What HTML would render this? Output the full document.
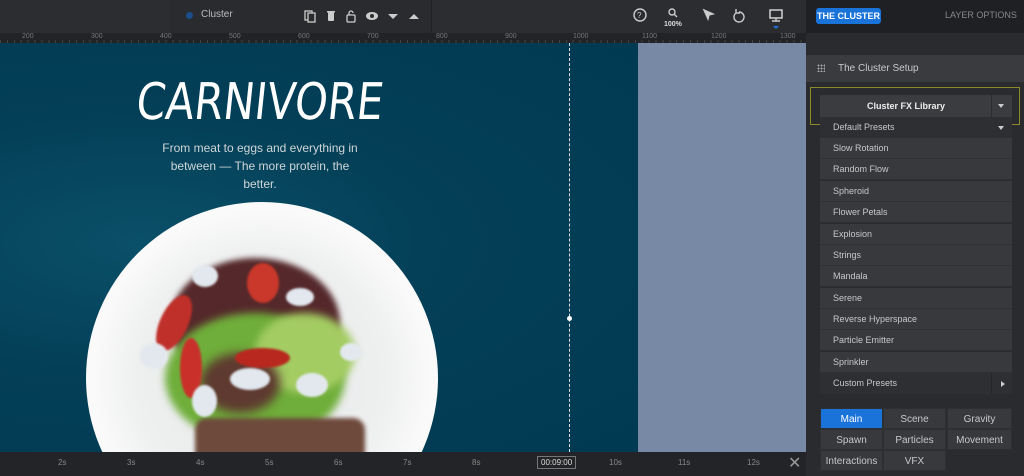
<!DOCTYPE html>
<html><head><meta charset="utf-8"><style>
*{margin:0;padding:0;box-sizing:border-box}
html,body{width:1024px;height:476px;overflow:hidden}
body{background:#2a2b2f;font-family:"Liberation Sans",sans-serif;position:relative}
.a{position:absolute}
.top{left:0;top:0;width:806px;height:33px;background:#2c2d31}
.ruler{left:0;top:33px;width:806px;height:10px;background:#222326;font-size:7px;color:#777;
background-image:repeating-linear-gradient(90deg,#444 0 1px,transparent 1px 6.9px);background-size:100% 3px;background-repeat:no-repeat;background-position:0 7px}
.canvas{left:0;top:43px;width:638px;height:409px;background:radial-gradient(ellipse at 140px 200px,#0a5068 0,#033f57 45%,#003a52 100%);overflow:hidden}
.grey{left:638px;top:43px;width:168px;height:409px;background:#7889a5}
.tl{left:0;top:452px;width:806px;height:24px;background:#232427;font-size:8px;color:#888;overflow:hidden}
.panel{left:806px;top:0;width:218px;height:476px;background:#2a2b2f}
.item{position:absolute;left:820px;width:192px;height:21px;background:#38393d;border-bottom:1px solid #2f3034;color:#c8c8c8;font-size:9px;line-height:21px;padding-left:13px}
.tab{position:absolute;width:63px;height:21px;background:#38393d;color:#c8c8c8;font-size:10px;text-align:center;line-height:21px;border:1px solid #2e2f33}
.b{position:absolute;border-radius:50%}
</style></head><body>
<div class="a top"></div>
<div class="a" style="left:170px;top:0;width:262px;height:33px;background:#2a2b2e;border-right:1px solid #222"></div>
<div class="a" style="left:186px;top:12px;width:7px;height:7px;border-radius:50%;background:#1b4e8a"></div>
<div class="a" style="left:201px;top:9px;color:#bbb;font-size:10px">Cluster</div>
<svg class="a" style="left:300px;top:7px" width="125" height="18" fill="#ccc">
<rect x="5" y="4" width="7" height="9" fill="none" stroke="#ccc" stroke-width="1.3"/><rect x="8" y="6" width="7" height="9" fill="#2a2b2e" stroke="#ccc" stroke-width="1.3"/>
<rect x="28" y="5" width="6" height="9" rx="1"/><rect x="27" y="4" width="8" height="1.5"/>
<rect x="47" y="8" width="8" height="7" rx="1" fill="none" stroke="#ccc" stroke-width="1.3"/><path d="M49 8V6a2 2 0 0 1 4 0" fill="none" stroke="#ccc" stroke-width="1.3"/>
<ellipse cx="72" cy="9" rx="6" ry="4"/><circle cx="72" cy="9" r="2" fill="#2a2b2e"/>
<path d="M88 7h10l-5 5z"/><path d="M109 12h10l-5-5z"/></svg>
<svg class="a" style="left:630px;top:6px" width="160" height="26" fill="none" stroke="#ccc" stroke-width="1.4">
<circle cx="10" cy="9" r="6"/><text x="7" y="12" font-size="8" fill="#ccc" stroke="none" font-family="Liberation Sans">?</text>
<circle cx="42" cy="6" r="3"/><path d="M44 8l3 3"/><text x="34" y="20" font-size="7" fill="#ddd" stroke="none" font-weight="bold" font-family="Liberation Sans">100%</text>
<path d="M74 4l9 4-4 1-1 4z" fill="#ccc"/>
<path d="M109 6a5 5 0 1 1-3 1M106 3v4h4"/>
<rect x="140" y="4" width="12" height="8" stroke="#ddd"/><path d="M146 12v3M142 15h8"/><path d="M143 20h6l-3 3z" fill="#1a73d9" stroke="none"/></svg>
<div class="a ruler"><span class="a" style="left:22px;top:0">200</span><span class="a" style="left:91px">300</span><span class="a" style="left:160px">400</span><span class="a" style="left:229px">500</span><span class="a" style="left:298px">600</span><span class="a" style="left:367px">700</span><span class="a" style="left:436px">800</span><span class="a" style="left:505px">900</span><span class="a" style="left:573px">1000</span><span class="a" style="left:642px">1100</span><span class="a" style="left:711px">1200</span><span class="a" style="left:780px">1300</span></div>
<div class="a canvas">
<div class="a" style="left:130px;top:34px;width:260px;text-align:center;color:#fff;font-family:'DejaVu Sans',sans-serif;font-size:44px;font-weight:normal;letter-spacing:0px;transform:skewX(-6deg) scaleY(1.15) scaleX(0.95)">CARNIVORE</div>
<div class="a" style="left:160px;top:96px;width:200px;text-align:center;color:#cfd6d8;font-size:12px;line-height:18px">From meat to eggs and everything in between — The more protein, the better.</div>
<div class="a" style="left:86px;top:159px;width:352px;height:352px;border-radius:50%;background:radial-gradient(circle,#e6e8ea 0,#eeefef 50%,#fafafa 68%,#f2f2f2 100%)"></div>
<div class="b" style="left:170px;top:215px;width:170px;height:130px;background:#55292b;filter:blur(3px)"></div>
<div class="b" style="left:165px;top:270px;width:180px;height:130px;background:#6fae3a;filter:blur(4px)"></div>
<div class="b" style="left:255px;top:270px;width:100px;height:80px;background:#a3cc62;filter:blur(4px)"></div>
<div class="b" style="left:200px;top:310px;width:80px;height:60px;background:#5e3a30;filter:blur(5px)"></div>
<div class="b" style="left:160px;top:250px;width:28px;height:60px;background:#c0302a;transform:rotate(25deg);filter:blur(1px)"></div>
<div class="b" style="left:180px;top:295px;width:22px;height:60px;background:#c9302a;filter:blur(1px)"></div>
<div class="b" style="left:247px;top:220px;width:32px;height:40px;background:#c9382a;filter:blur(1px)"></div>
<div class="b" style="left:235px;top:305px;width:55px;height:20px;background:#b8281f;filter:blur(1px)"></div>
<div class="a" style="left:195px;top:375px;width:170px;height:50px;border-radius:12px;background:#6e4a3c;filter:blur(2px)"></div>
<div class="b" style="left:140px;top:300px;width:28px;height:26px;background:#e2e8ee;filter:blur(1px)"></div>
<div class="b" style="left:230px;top:325px;width:40px;height:22px;background:#e2e8ee;filter:blur(1px)"></div>
<div class="b" style="left:296px;top:330px;width:32px;height:24px;background:#e2e8ee;filter:blur(1px)"></div>
<div class="b" style="left:192px;top:342px;width:25px;height:32px;background:#e2e8ee;filter:blur(1px)"></div>
<div class="b" style="left:286px;top:245px;width:28px;height:18px;background:#e2e8ee;filter:blur(1px)"></div>
<div class="b" style="left:192px;top:222px;width:26px;height:22px;background:#e2e8ee;filter:blur(1px)"></div>
<div class="b" style="left:340px;top:300px;width:22px;height:18px;background:#e2e8ee;filter:blur(1px)"></div>
</div>
<div class="a grey"></div>
<div class="a" style="left:569px;top:43px;height:409px;border-left:1px dashed #ddd"></div>
<div class="a" style="left:567px;top:316px;width:5px;height:5px;border-radius:50%;background:#fff"></div>
<div class="a tl">
<span class="a" style="left:58px;top:6px">2s</span><span class="a" style="left:127px;top:6px">3s</span><span class="a" style="left:196px;top:6px">4s</span><span class="a" style="left:265px;top:6px">5s</span><span class="a" style="left:334px;top:6px">6s</span><span class="a" style="left:403px;top:6px">7s</span><span class="a" style="left:472px;top:6px">8s</span>
<span class="a" style="left:537px;top:4px;border:1px solid #777;padding:1px 3px;color:#ddd">00:09:00</span>
<span class="a" style="left:609px;top:6px">10s</span><span class="a" style="left:678px;top:6px">11s</span><span class="a" style="left:747px;top:6px">12s</span>
<span class="a" style="left:788px;top:1px;font-size:16px;color:#999">✕</span></div>
<div class="a panel"></div>
<div class="a" style="left:806px;top:0;width:218px;height:33px;background:#1f2023"></div>
<div class="a" style="left:816px;top:8px;width:65px;height:16px;background:#1a73d9;border-radius:3px;color:#fff;font-size:9px;font-weight:bold;line-height:16px;text-align:center">THE CLUSTER</div>
<div class="a" style="left:945px;top:10px;color:#888;font-size:9px">LAYER OPTIONS</div>
<div class="a" style="left:806px;top:55px;width:218px;height:27px;background:#393b3f;color:#c8c8c8;font-size:10px;line-height:27px;padding-left:32px">The Cluster Setup</div>
<div class="a" style="left:817px;top:64px;width:8px;height:8px;background:radial-gradient(#aaa 1px,transparent 1px) 0 0/3px 3px"></div>
<div class="a" style="left:820px;top:95px;width:192px;height:22px;background:#3b3c40;color:#eee;font-size:9px;font-weight:bold;line-height:22px;text-align:center;padding-right:20px">Cluster FX Library</div>
<div class="a" style="left:991px;top:95px;width:1px;height:22px;background:#2c2d30"></div>
<div class="a" style="left:998px;top:104px;border:3px solid transparent;border-top:4px solid #ccc"></div>
<div class="a" style="left:810px;top:87px;width:210px;height:38px;border:1px solid #8c8a2a"></div>
<div class="item" style="top:117px;background:#2e2f33">Default Presets</div>
<div class="a" style="left:998px;top:126px;border:3px solid transparent;border-top:4px solid #ccc"></div>
<div class="item" style="top:138px">Slow Rotation</div>
<div class="item" style="top:159px">Random Flow</div>
<div class="item" style="top:181px">Spheroid</div>
<div class="item" style="top:202px">Flower Petals</div>
<div class="item" style="top:224px">Explosion</div>
<div class="item" style="top:245px">Strings</div>
<div class="item" style="top:266px">Mandala</div>
<div class="item" style="top:288px">Serene</div>
<div class="item" style="top:309px">Reverse Hyperspace</div>
<div class="item" style="top:330px">Particle Emitter</div>
<div class="item" style="top:352px">Sprinkler</div>
<div class="item" style="top:373px;background:#2e2f33">Custom Presets</div>
<div class="a" style="left:991px;top:373px;width:1px;height:21px;background:#25262a"></div>
<div class="a" style="left:1001px;top:381px;border:3px solid transparent;border-left:4px solid #ccc"></div>
<div class="tab" style="left:820px;top:408px;background:#1a73d9;color:#fff">Main</div>
<div class="tab" style="left:883px;top:408px">Scene</div>
<div class="tab" style="left:947px;top:408px;width:65px">Gravity</div>
<div class="tab" style="left:820px;top:429px">Spawn</div>
<div class="tab" style="left:883px;top:429px">Particles</div>
<div class="tab" style="left:947px;top:429px;width:65px">Movement</div>
<div class="tab" style="left:820px;top:450px">Interactions</div>
<div class="tab" style="left:883px;top:450px">VFX</div>
</body></html>
